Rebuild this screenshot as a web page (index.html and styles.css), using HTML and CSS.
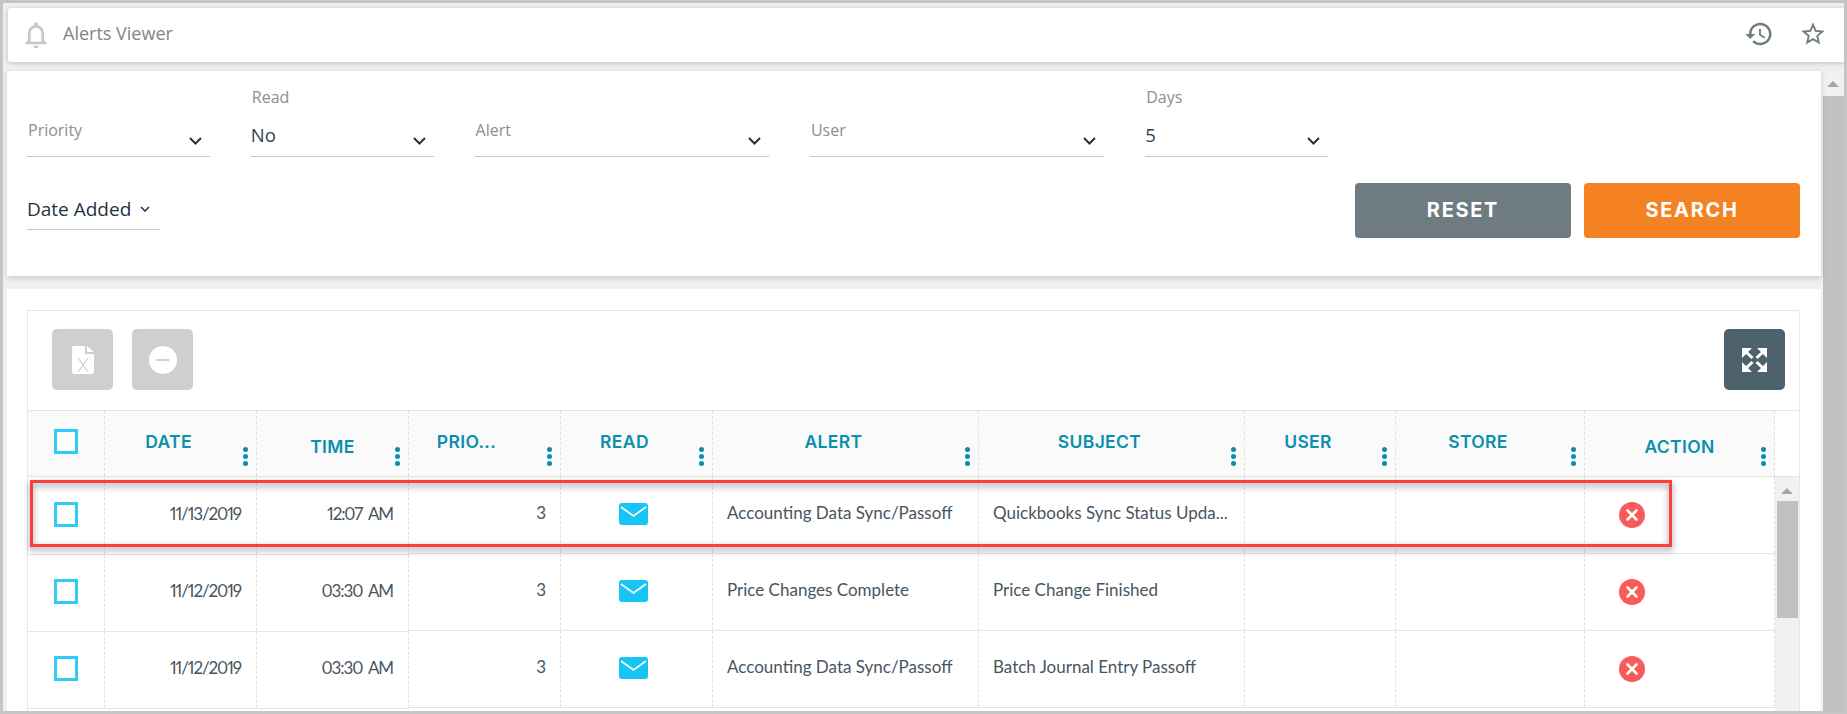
FILE: index.html
```html
<!DOCTYPE html>
<html lang="en">
<head>
<meta charset="utf-8">
<title>Alerts Viewer</title>
<link rel="stylesheet" href="styles.css">
</head>
<body>
<div class="frame">
  <header class="topbar">
    <svg class="bell" viewBox="0 0 24 24"><path d="M12 22c1.1 0 2-.9 2-2h-4c0 1.1.9 2 2 2zm6-6v-5c0-3.07-1.63-5.64-4.5-6.32V4c0-.83-.67-1.5-1.5-1.5s-1.5.67-1.5 1.5v.68C7.64 5.36 6 7.92 6 11v5l-2 2v1h16v-1l-2-2zm-2 1H8v-6c0-2.48 1.51-4.5 4-4.5s4 2.02 4 4.5v6z"/></svg>
    <span class="title">Alerts Viewer</span>
    <svg class="history" viewBox="0 0 24 24"><path d="M13 3c-4.97 0-9 4.03-9 9H1l3.89 3.89.07.14L9 12H6c0-3.87 3.13-7 7-7s7 3.13 7 7-3.13 7-7 7c-1.93 0-3.68-.79-4.94-2.06l-1.42 1.42C8.27 19.99 10.51 21 13 21c4.97 0 9-4.03 9-9s-4.03-9-9-9zm-1 5v5l4.28 2.54.72-1.21-3.5-2.08V8H12z"/></svg>
    <svg class="star" viewBox="0 0 24 24"><path d="M22 9.24l-7.19-.62L12 2 9.19 8.63 2 9.24l5.46 4.73L5.82 21 12 17.27 18.18 21l-1.63-7.03L22 9.24zM12 15.4l-3.76 2.27 1-4.28-3.32-2.88 4.38-.38L12 6.1l1.71 4.04 4.38.38-3.32 2.88 1 4.28L12 15.4z"/></svg>
  </header>

  <div class="workspace">
    <main class="content">
      <section class="filters">
        <div class="filter-row">
          <div class="field narrow"><div class="field-label"></div><div class="field-box placeholder"><span>Priority</span><svg class="chev" viewBox="0 0 13 8"><path d="M1 1l5.5 5.5L12 1"/></svg></div></div>
          <div class="field narrow"><div class="field-label">Read</div><div class="field-box"><span>No</span><svg class="chev" viewBox="0 0 13 8"><path d="M1 1l5.5 5.5L12 1"/></svg></div></div>
          <div class="field wide"><div class="field-label"></div><div class="field-box placeholder"><span>Alert</span><svg class="chev" viewBox="0 0 13 8"><path d="M1 1l5.5 5.5L12 1"/></svg></div></div>
          <div class="field wide"><div class="field-label"></div><div class="field-box placeholder"><span>User</span><svg class="chev" viewBox="0 0 13 8"><path d="M1 1l5.5 5.5L12 1"/></svg></div></div>
          <div class="field narrow"><div class="field-label">Days</div><div class="field-box"><span>5</span><svg class="chev" viewBox="0 0 13 8"><path d="M1 1l5.5 5.5L12 1"/></svg></div></div>
        </div>
        <div class="action-row">
          <div class="sort-select"><span>Date Added</span><svg class="chev-small" viewBox="0 0 10 6"><path d="M1 1l4 4 4-4"/></svg></div>
          <div class="buttons">
            <button class="btn btn-reset">RESET</button>
            <button class="btn btn-search">SEARCH</button>
          </div>
        </div>
      </section>

      <section class="results">
        <div class="table-card">
          <div class="toolbar">
            <button class="tool tool-off">
              <svg class="tool-icon" viewBox="0 0 28 28"><g transform="translate(3 0)"><path class="file" d="M2 0h11v8h9v18a2 2 0 0 1-2 2H2a2 2 0 0 1-2-2V2a2 2 0 0 1 2-2z"/><path class="file" d="M15 0l7 6h-7z"/><path class="file-x" d="M6 12l10 14M16 12L6 26"/></g></svg>
            </button>
            <button class="tool tool-off">
              <svg class="tool-icon" viewBox="0 0 28 28"><circle class="file" cx="14" cy="14" r="14"/><path class="minus" d="M7.5 14h13"/></svg>
            </button>
            <button class="tool tool-on">
              <svg class="tool-icon expand" viewBox="0 0 25 24"><path class="arrow-fill" d="M0 0h10L0 10zM25 0H15l10 10zM0 24h10L0 14zM25 24H15l10-10z"/><path class="arrow-line" d="M4 4l6.5 6M21 4l-6.5 6M4 20l6.5-6M21 20l-6.5-6"/></svg>
            </button>
          </div>

          <div class="grid-head">
            <div class="hcell hcheck"><span class="checkbox"></span></div>
            <div class="hcell pad">DATE<i class="dots"></i></div>
            <div class="hcell low">TIME<i class="dots"></i></div>
            <div class="hcell pad-more">PRIO...<i class="dots"></i></div>
            <div class="hcell pad">READ<i class="dots"></i></div>
            <div class="hcell pad">ALERT<i class="dots"></i></div>
            <div class="hcell pad">SUBJECT<i class="dots"></i></div>
            <div class="hcell pad">USER<i class="dots"></i></div>
            <div class="hcell pad">STORE<i class="dots"></i></div>
            <div class="hcell low">ACTION<i class="dots"></i></div>
          </div>

          <div class="grid-body">
            <div class="pane-frozen">
              <div class="frow"><div class="cell ccheck"><span class="checkbox"></span></div><div class="cell num">11/13/2019</div><div class="cell num">12:07 AM</div></div>
              <div class="frow"><div class="cell ccheck"><span class="checkbox"></span></div><div class="cell num">11/12/2019</div><div class="cell num">03:30 AM</div></div>
              <div class="frow"><div class="cell ccheck"><span class="checkbox"></span></div><div class="cell num">11/12/2019</div><div class="cell num">03:30 AM</div></div>
            </div>
            <div class="pane-main">
              <div class="mrow">
                <div class="cell num">3</div>
                <div class="cell ccenter"><svg class="mail" viewBox="0 0 29 22"><rect width="29" height="22" rx="3"/><path d="M2 4l12.5 9L27 4"/></svg></div>
                <div class="cell">Accounting Data Sync/Passoff</div>
                <div class="cell">Quickbooks Sync Status Upda...</div>
                <div class="cell"></div><div class="cell"></div>
                <div class="cell caction"><svg class="del" viewBox="0 0 26 26"><circle cx="13" cy="13" r="13"/><path d="M8.5 8.5l9 9M17.5 8.5l-9 9"/></svg></div>
              </div>
              <div class="mrow">
                <div class="cell num">3</div>
                <div class="cell ccenter"><svg class="mail" viewBox="0 0 29 22"><rect width="29" height="22" rx="3"/><path d="M2 4l12.5 9L27 4"/></svg></div>
                <div class="cell">Price Changes Complete</div>
                <div class="cell">Price Change Finished</div>
                <div class="cell"></div><div class="cell"></div>
                <div class="cell caction"><svg class="del" viewBox="0 0 26 26"><circle cx="13" cy="13" r="13"/><path d="M8.5 8.5l9 9M17.5 8.5l-9 9"/></svg></div>
              </div>
              <div class="mrow">
                <div class="cell num">3</div>
                <div class="cell ccenter"><svg class="mail" viewBox="0 0 29 22"><rect width="29" height="22" rx="3"/><path d="M2 4l12.5 9L27 4"/></svg></div>
                <div class="cell">Accounting Data Sync/Passoff</div>
                <div class="cell">Batch Journal Entry Passoff</div>
                <div class="cell"></div><div class="cell"></div>
                <div class="cell caction"><svg class="del" viewBox="0 0 26 26"><circle cx="13" cy="13" r="13"/><path d="M8.5 8.5l9 9M17.5 8.5l-9 9"/></svg></div>
              </div>
            </div>
            <div class="vscroll inner"><span class="scroll-up"></span><span class="thumb"></span></div>
          </div>
          <div class="highlight"></div>
        </div>
      </section>
    </main>
    <div class="vscroll outer"><span class="scroll-up"></span><span class="thumb"></span></div>
  </div>
</div>
</body>
</html>
```
FILE: styles.css
```css
* { box-sizing: border-box; }
html, body { margin: 0; padding: 0; }
body { font-family: "Lato", "Open Sans", sans-serif; color: #47555f; background: #c4c6c6; }

.frame {
  width: 1847px; height: 714px;
  border: 3px solid #c4c6c6;
  background: #eff1f1;
  overflow: hidden;
  display: flex; flex-direction: column;
}

/* top bar */
.topbar {
  flex: none; height: 54px;
  margin: 5px 0 9px 5px;
  padding: 0 17px 0 12px;
  background: #fff;
  border-radius: 3px 0 0 3px;
  box-shadow: 0 1px 5px rgba(0,0,0,.22);
  display: flex; align-items: center;
  position: relative; z-index: 2;
}
.bell { width: 32px; height: 32px; fill: #c6c8ca; margin-right: 11px; }
.title { font-family: "Open Sans", sans-serif; font-size: 18px; color: #7f868b; margin-top: -4px; }
.history { width: 30px; height: 30px; fill: #6f7c82; margin-left: auto; margin-right: 25px; margin-top: -3px; }
.star { width: 28px; height: 28px; fill: #6f7c82; margin-top: -3px; }

.workspace { flex: 1; min-height: 0; display: flex; margin-left: 4px; }
.content { flex: 1; min-width: 0; display: flex; flex-direction: column; }

/* filters */
.filters {
  flex: none; height: 205px;
  padding: 16px 21px 0 20px;
  background: #fff;
  border-radius: 4px 0 0 0;
  box-shadow: 0 2px 6px rgba(0,0,0,.16);
  position: relative; z-index: 1;
}
.filter-row { display: flex; gap: 40.8px; }
.field { display: flex; flex-direction: column; }
.narrow { width: 183px; }
.wide { width: 294.5px; }
.field-label { height: 20px; font-family: "Open Sans", sans-serif; font-size: 16px; line-height: 20px; color: #8a8f93; padding-left: 1px; }
.field-box {
  height: 50px;
  border-bottom: 1px solid #c5c8ca;
  display: flex; justify-content: space-between; align-items: flex-start;
  padding: 16px 8px 0 0;
  font-family: "Open Sans", sans-serif; font-size: 18.5px; line-height: 24px; color: #33444f;
}
.field-box.placeholder { padding-top: 13px; padding-left: 1px; font-size: 16px; line-height: 20px; color: #8a8f93; }
.chev { width: 13px; height: 8px; fill: none; stroke: #1f3442; stroke-width: 2; margin-top: 14px; flex: none; }
.placeholder .chev { margin-top: 17px; }

.action-row { display: flex; justify-content: space-between; align-items: flex-start; margin-top: 26px; }
.sort-select {
  width: 133px; height: 47px;
  border-bottom: 1px solid #c5c8ca;
  padding-top: 14px;
  display: flex; gap: 9px;
  font-family: "Open Sans", sans-serif; font-size: 19px; line-height: 24px; color: #1f3442;
}
.chev-small { width: 10px; height: 6px; fill: none; stroke: #1f3442; stroke-width: 1.5; margin-top: 9px; flex: none; }
.buttons { display: flex; gap: 13px; }
.btn {
  width: 216px; height: 55px;
  border: 0; border-radius: 4px;
  padding: 0 0 1px;
  color: #fff;
  font-family: "Inter", sans-serif; font-weight: 700; font-size: 20px; letter-spacing: 1.7px;
}
.btn-reset { background: #6e7b81; }
.btn-search { background: #f58222; }

/* results */
.results { flex: 1; min-height: 0; margin-top: 13px; padding: 21px 21px 0 20px; background: #fff; overflow: hidden; }
.table-card { position: relative; height: 440px; border: 1px solid #e6e8e8; }
.toolbar { height: 99px; padding: 18px 14px 0 24px; display: flex; gap: 19px; }
.tool { width: 61px; height: 61px; border: 0; border-radius: 5px; padding: 0; display: flex; align-items: center; justify-content: center; }
.tool-off { background: #cfcfcf; }
.tool-on { background: #4d626d; margin-left: auto; }
.tool-icon { width: 28px; height: 28px; }
.expand { width: 25px; height: 24px; }
.file { fill: #fff; }
.file-x { stroke: #cfcfcf; stroke-width: 1.2; fill: none; }
.minus { stroke: #cfcfcf; stroke-width: 2; }
.arrow-fill { fill: #fff; }
.arrow-line { stroke: #fff; stroke-width: 3; fill: none; }

.grid-head {
  display: grid;
  grid-template-columns: 77px 152px 152px 152px 152px 266px 266px 151px 189px 190px;
  height: 67px;
  border-top: 1px solid #e4e6e6;
  border-bottom: 1px solid #e4e6e6;
}
.hcell {
  position: relative;
  background: #fafafa;
  border-right: 1px dashed #dfe1e1;
  display: flex; align-items: center; justify-content: center;
  font-family: "Inter", sans-serif; font-weight: 600; font-size: 17.5px; color: #0a8fae;
  letter-spacing: .35px;
}
.hcheck { justify-content: flex-start; padding-left: 26px; padding-bottom: 4px; }
.pad { padding-right: 24px; padding-bottom: 5px; }
.pad-more { padding-right: 36px; padding-bottom: 5px; }
.low { padding-top: 5px; }
.dots {
  position: absolute; right: 8px; bottom: 10px;
  width: 5px; height: 5px; border-radius: 50%;
  background: #0a8fae;
  box-shadow: 0 -7px 0 #0a8fae, 0 -14px 0 #0a8fae;
}
.checkbox { display: block; width: 24px; height: 25px; border: 3px solid #2fcdf6; background: #fff; }

.grid-body { display: flex; height: 240px; }
.pane-frozen { width: 381px; flex: none; padding-top: 1px; }
.pane-main { width: 1366px; flex: none; }
.frow { display: grid; grid-template-columns: 77px 152px 152px; height: 77px; border-bottom: 1px solid #e4e6e6; }
.mrow { display: grid; grid-template-columns: 152px 152px 266px 266px 151px 189px 190px; height: 77px; border-bottom: 1px solid #e4e6e6; }
.cell {
  display: flex; align-items: center;
  padding: 0 15px 5px 14px;
  border-right: 1px dashed #e0e2e2;
  font-size: 17px; color: #47555f;
  font-variant-numeric: proportional-nums;
  white-space: nowrap; overflow: hidden;
}
.num { justify-content: flex-end; letter-spacing: -1.1px; word-spacing: 3px; }
.ccheck { padding: 0 0 3px 26px; }
.ccenter { justify-content: center; padding: 0 7px 2px 0; }
.caction { padding: 0 0 0 34px; }
.mail { width: 29px; height: 22px; flex: none; }
.mail rect { fill: #16c5f5; }
.mail path { fill: none; stroke: #fff; stroke-width: 1.8; }
.del { width: 26px; height: 26px; flex: none; }
.del circle { fill: #fa5a5a; }
.del path { stroke: #fff; stroke-width: 2.6; stroke-linecap: round; }

.vscroll { background: #f1f1f1; display: flex; flex-direction: column; align-items: center; flex: none; }
.scroll-up { flex: none; width: 0; height: 0; border-left: 6px solid transparent; border-right: 6px solid transparent; border-bottom: 6px solid #a6a6a6; }
.thumb { display: block; background: #c1c1c1; }
.inner { width: 24px; padding-top: 11px; }
.inner .thumb { width: 21px; height: 117px; margin-top: 7px; }
.outer { width: 23px; padding-top: 10px; }
.outer .thumb { width: 21px; flex: 1; margin-top: 9px; align-self: flex-end; }

.highlight {
  position: absolute; left: 2px; top: 169px;
  width: 1642px; height: 67px;
  border: 3px solid #f84040;
  filter: drop-shadow(0 3px 3px rgba(0,0,0,.45));
  pointer-events: none;
}
```
